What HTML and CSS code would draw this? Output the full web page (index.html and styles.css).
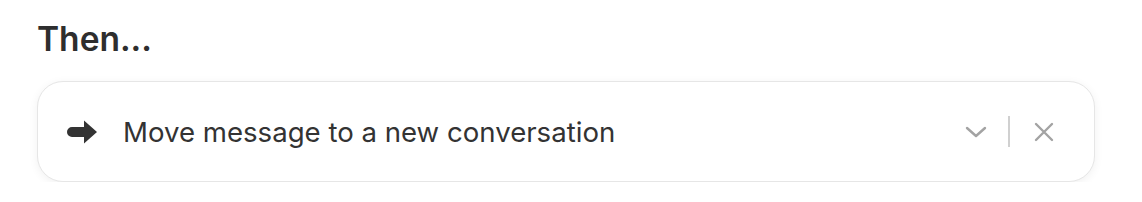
FILE: index.html
```html
<!DOCTYPE html>
<html>
<head>
<meta charset="utf-8">
<link rel="stylesheet" href="styles.css">
</head>
<body>
<div class="page">
  <h2 class="title">Then...</h2>
  <div class="card">
    <svg class="arrow" width="30" height="24" viewBox="0 0 30 24">
      <path d="M5 7 H17 V0.5 L30 12 L17 23.5 V17 H5 A5 5 0 0 1 5 7 Z" fill="#333"/>
    </svg>
    <span class="label">Move message to a new conversation</span>
    <div class="actions">
      <svg class="chev" width="22" height="12" viewBox="0 0 22 12">
        <path d="M2 2 L11 10 L20 2" fill="none" stroke="#a3a3a3" stroke-width="2.4" stroke-linecap="round" stroke-linejoin="round"/>
      </svg>
      <span class="divider"></span>
      <svg class="close" width="20" height="20" viewBox="0 0 20 20">
        <path d="M2 2 L18 18 M18 2 L2 18" fill="none" stroke="#a3a3a3" stroke-width="2.4" stroke-linecap="round"/>
      </svg>
    </div>
  </div>
</div>
</body>
</html>
```

FILE: styles.css
```css
html, body {
  margin: 0;
  padding: 0;
  background: #ffffff;
}
.page {
  padding: 18px 47px 0 37px;
  font-family: Inter, "Noto Sans", sans-serif;
  color: #333333;
}
.title {
  margin: 0;
  font-size: 33.5px;
  font-weight: 600;
  line-height: 42px;
  color: #2e2e2e;
}
.card {
  margin-top: 21px;
  height: 101px;
  box-sizing: border-box;
  border: 1px solid #e6e6e6;
  border-radius: 26px;
  background: #fff;
  box-shadow: 0 2px 10px rgba(0,0,0,0.06);
  display: flex;
  align-items: center;
  padding: 0 40px 0 29px;
}
.arrow {
  flex: none;
  display: block;
}
.label {
  margin-left: 26px;
  font-size: 27.6px;
  color: #333;
  flex: 1;
}
.actions {
  display: flex;
  align-items: center;
}
.chev {
  display: block;
}
.divider {
  width: 2px;
  height: 31px;
  background: #d0d0d0;
  margin: 0 24px 0 21px;
}
.close {
  display: block;
}
```
